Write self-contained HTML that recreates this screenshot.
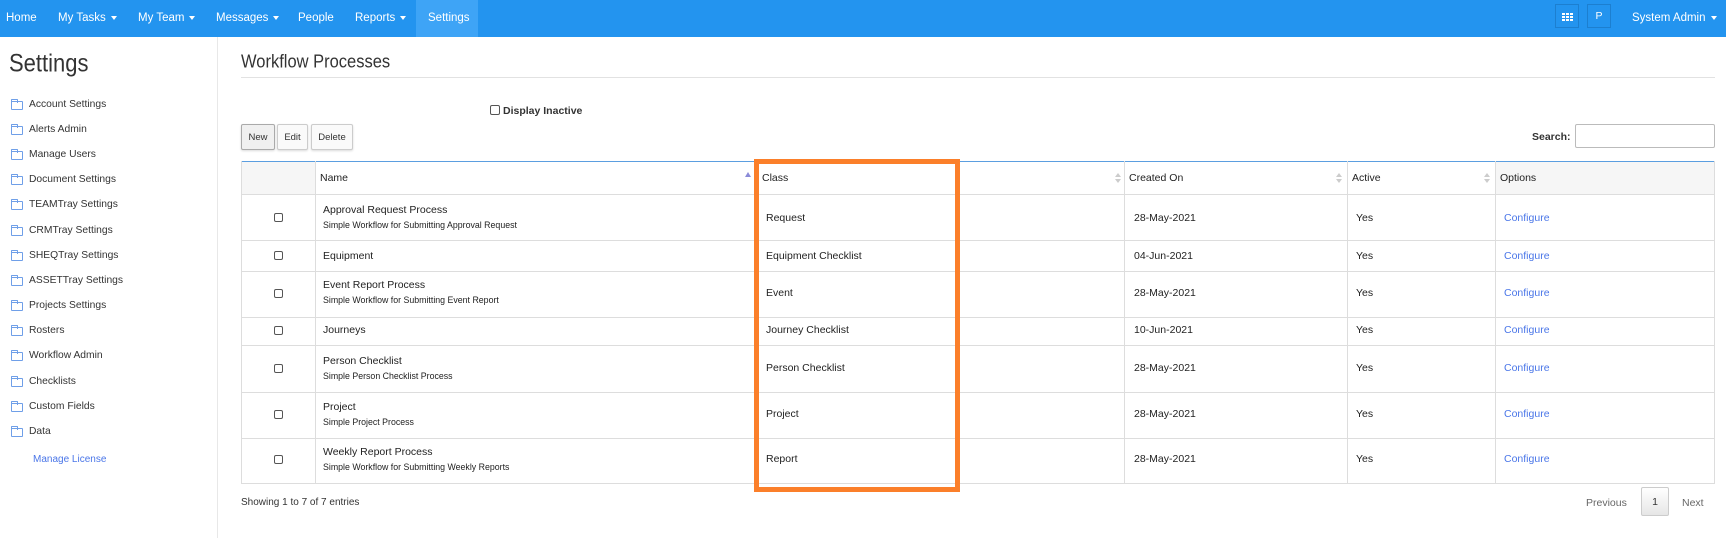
<!DOCTYPE html>
<html><head><meta charset="utf-8">
<style>
*{box-sizing:border-box;margin:0;padding:0}
body{width:1726px;height:538px;overflow:hidden;background:#fff;font-family:"Liberation Sans",Arial,sans-serif;color:#222;position:relative}
.a{position:absolute;white-space:nowrap}
.nav{position:absolute;left:0;top:0;width:1726px;height:37px;background:#2394ef}
.nav .a{color:#fff;font-size:11.5px;top:12px}
.car{display:inline-block;width:0;height:0;border-left:3.5px solid transparent;border-right:3.5px solid transparent;border-top:4px solid #fff;vertical-align:middle;margin-left:5px}
.side{font-size:10.3px;color:#333}
.side .a{margin-top:2px}
.side .fold{margin-top:2px}
.fold{position:absolute;width:12px;height:9px;border:1px solid #6f9fe8;border-radius:1px}
.fold:before{content:"";position:absolute;left:-1px;top:-3px;width:5px;height:3px;border:1px solid #6f9fe8;border-bottom:none;border-radius:1px 1px 0 0}
.btn{position:absolute;top:124px;height:26px;border:1px solid #ccc;border-radius:2px;background:#fafafa;font-size:9.5px;color:#333;text-align:center;line-height:26px;box-shadow:0 1px 2px rgba(0,0,0,.15)}
.hl{position:absolute;left:241px;width:1474px;height:1px;background:#ddd}
.vl{position:absolute;width:1px;background:#ddd;top:161px;height:322px}
.t{font-size:10.5px;color:#222}
.s{font-size:8.8px;color:#222;margin-top:-2px}
.cb{position:absolute;width:9px;height:9px;border:1px solid #555;border-radius:2px;left:274px}
.cfg{color:#4a76e8;font-size:10.5px}
.sort{position:absolute;width:6px}
.sort:before{content:"";position:absolute;border-left:3px solid transparent;border-right:3px solid transparent;border-bottom:4px solid #ccc;top:0}
.sort:after{content:"";position:absolute;border-left:3px solid transparent;border-right:3px solid transparent;border-top:4px solid #ccc;top:6px}
</style></head><body>
<div class="nav">
<div style="position:absolute;left:416px;top:0;width:62px;height:37px;background:#3ea4f6"></div>
<div class="a" style="left:6px">Home</div>
<div class="a" style="left:58px">My Tasks<span class="car"></span></div>
<div class="a" style="left:138px">My Team<span class="car"></span></div>
<div class="a" style="left:216px">Messages<span class="car"></span></div>
<div class="a" style="left:298px">People</div>
<div class="a" style="left:355px">Reports<span class="car"></span></div>
<div class="a" style="left:428px">Settings</div>
<div style="position:absolute;left:1555px;top:4px;width:24px;height:24px;border:1px solid #1c7fd0"><div style="position:absolute;left:6px;top:8px;width:11px;height:8px;background:repeating-linear-gradient(90deg,#fff 0 3px,transparent 3px 4px)"></div><div style="position:absolute;left:6px;top:10px;width:11px;height:1px;background:#2394ef"></div><div style="position:absolute;left:6px;top:13px;width:11px;height:1px;background:#2394ef"></div></div>
<div style="position:absolute;left:1587px;top:4px;width:24px;height:24px;border:1px solid #1c7fd0;color:#fff;font-size:10.5px;text-align:center;line-height:22px">P</div>
<div class="a" style="left:1632px">System Admin<span class="car"></span></div>
</div>

<div style="position:absolute;left:217px;top:37px;width:1px;height:501px;background:#e8e8e8"></div>
<div class="a" style="left:9px;top:49px;font-size:22px;color:#333;transform:scaleY(1.12);transform-origin:top left">Settings</div>

<div class="side">
<div class="fold" style="left:11px;top:99px"></div><div class="a" style="left:29px;top:97px">Account Settings</div>
<div class="fold" style="left:11px;top:124px"></div><div class="a" style="left:29px;top:122px">Alerts Admin</div>
<div class="fold" style="left:11px;top:149px"></div><div class="a" style="left:29px;top:147px">Manage Users</div>
<div class="fold" style="left:11px;top:174px"></div><div class="a" style="left:29px;top:172px">Document Settings</div>
<div class="fold" style="left:11px;top:199px"></div><div class="a" style="left:29px;top:197px">TEAMTray Settings</div>
<div class="fold" style="left:11px;top:225px"></div><div class="a" style="left:29px;top:223px">CRMTray Settings</div>
<div class="fold" style="left:11px;top:250px"></div><div class="a" style="left:29px;top:248px">SHEQTray Settings</div>
<div class="fold" style="left:11px;top:275px"></div><div class="a" style="left:29px;top:273px">ASSETTray Settings</div>
<div class="fold" style="left:11px;top:300px"></div><div class="a" style="left:29px;top:298px">Projects Settings</div>
<div class="fold" style="left:11px;top:325px"></div><div class="a" style="left:29px;top:323px">Rosters</div>
<div class="fold" style="left:11px;top:350px"></div><div class="a" style="left:29px;top:348px">Workflow Admin</div>
<div class="fold" style="left:11px;top:376px"></div><div class="a" style="left:29px;top:374px">Checklists</div>
<div class="fold" style="left:11px;top:401px"></div><div class="a" style="left:29px;top:399px">Custom Fields</div>
<div class="fold" style="left:11px;top:426px"></div><div class="a" style="left:29px;top:424px">Data</div>
<div class="a" style="left:33px;top:452px;color:#4a76e8;font-size:10px">Manage License</div>
</div>

<div class="a" style="left:241px;top:52px;font-size:16.5px;color:#333;transform:scaleY(1.1);transform-origin:top left">Workflow Processes</div>
<div style="position:absolute;left:241px;top:77px;width:1474px;height:1px;background:#e2e2e2"></div>

<div style="position:absolute;left:490px;top:105px;width:10px;height:10px;border:1px solid #555;border-radius:2px"></div>
<div class="a" style="left:503px;top:105px;font-size:10.5px;font-weight:bold;color:#333">Display Inactive</div>

<div class="btn" style="left:241px;width:34px;background:#f0f0f0;border-color:#aaa">New</div>
<div class="btn" style="left:277px;width:31px">Edit</div>
<div class="btn" style="left:311px;width:42px">Delete</div>

<div class="a" style="left:1532px;top:131px;font-size:10.5px;font-weight:bold;color:#333">Search:</div>
<div style="position:absolute;left:1575px;top:124px;width:140px;height:24px;border:1px solid #bbb;border-radius:2px"></div>

<div style="position:absolute;left:241px;top:161px;width:74px;height:33px;background:#f6f6f6"></div>
<div style="position:absolute;left:1495px;top:161px;width:220px;height:33px;background:#f6f6f6"></div>
<div style="position:absolute;left:241px;top:161px;width:1474px;height:1px;background:#5b9ee0"></div>
<div class="hl" style="top:194px"></div>
<div class="hl" style="top:240px"></div>
<div class="hl" style="top:271px"></div>
<div class="hl" style="top:317px"></div>
<div class="hl" style="top:345px"></div>
<div class="hl" style="top:392px"></div>
<div class="hl" style="top:438px"></div>
<div class="hl" style="top:483px"></div>
<div class="vl" style="left:241px"></div>
<div class="vl" style="left:315px"></div>
<div class="vl" style="left:757px"></div>
<div class="vl" style="left:1124px"></div>
<div class="vl" style="left:1347px"></div>
<div class="vl" style="left:1495px"></div>
<div class="vl" style="left:1714px"></div>

<div class="a t" style="left:320px;top:172px">Name</div>
<div style="position:absolute;left:745px;top:172px;border-left:3px solid transparent;border-right:3px solid transparent;border-bottom:5px solid #8b8bd8"></div>
<div class="a t" style="left:762px;top:172px">Class</div>
<div class="sort" style="left:1115px;top:173px"></div>
<div class="a t" style="left:1129px;top:172px">Created On</div>
<div class="sort" style="left:1336px;top:173px"></div>
<div class="a t" style="left:1352px;top:172px">Active</div>
<div class="sort" style="left:1484px;top:173px"></div>
<div class="a t" style="left:1500px;top:172px">Options</div>

<div class="cb" style="top:213px"></div>
<div class="a t" style="left:323px;top:204px">Approval Request Process</div>
<div class="a s" style="left:323px;top:222px">Simple Workflow for Submitting Approval Request</div>
<div class="a t" style="left:766px;top:212px">Request</div>
<div class="a t" style="left:1134px;top:212px">28-May-2021</div>
<div class="a t" style="left:1356px;top:212px">Yes</div>
<div class="a cfg" style="left:1504px;top:212px">Configure</div>

<div class="cb" style="top:251px"></div>
<div class="a t" style="left:323px;top:250px">Equipment</div>
<div class="a t" style="left:766px;top:250px">Equipment Checklist</div>
<div class="a t" style="left:1134px;top:250px">04-Jun-2021</div>
<div class="a t" style="left:1356px;top:250px">Yes</div>
<div class="a cfg" style="left:1504px;top:250px">Configure</div>

<div class="cb" style="top:289px"></div>
<div class="a t" style="left:323px;top:279px">Event Report Process</div>
<div class="a s" style="left:323px;top:297px">Simple Workflow for Submitting Event Report</div>
<div class="a t" style="left:766px;top:287px">Event</div>
<div class="a t" style="left:1134px;top:287px">28-May-2021</div>
<div class="a t" style="left:1356px;top:287px">Yes</div>
<div class="a cfg" style="left:1504px;top:287px">Configure</div>

<div class="cb" style="top:326px"></div>
<div class="a t" style="left:323px;top:324px">Journeys</div>
<div class="a t" style="left:766px;top:324px">Journey Checklist</div>
<div class="a t" style="left:1134px;top:324px">10-Jun-2021</div>
<div class="a t" style="left:1356px;top:324px">Yes</div>
<div class="a cfg" style="left:1504px;top:324px">Configure</div>

<div class="cb" style="top:364px"></div>
<div class="a t" style="left:323px;top:355px">Person Checklist</div>
<div class="a s" style="left:323px;top:373px">Simple Person Checklist Process</div>
<div class="a t" style="left:766px;top:362px">Person Checklist</div>
<div class="a t" style="left:1134px;top:362px">28-May-2021</div>
<div class="a t" style="left:1356px;top:362px">Yes</div>
<div class="a cfg" style="left:1504px;top:362px">Configure</div>

<div class="cb" style="top:410px"></div>
<div class="a t" style="left:323px;top:401px">Project</div>
<div class="a s" style="left:323px;top:419px">Simple Project Process</div>
<div class="a t" style="left:766px;top:408px">Project</div>
<div class="a t" style="left:1134px;top:408px">28-May-2021</div>
<div class="a t" style="left:1356px;top:408px">Yes</div>
<div class="a cfg" style="left:1504px;top:408px">Configure</div>

<div class="cb" style="top:455px"></div>
<div class="a t" style="left:323px;top:446px">Weekly Report Process</div>
<div class="a s" style="left:323px;top:464px">Simple Workflow for Submitting Weekly Reports</div>
<div class="a t" style="left:766px;top:453px">Report</div>
<div class="a t" style="left:1134px;top:453px">28-May-2021</div>
<div class="a t" style="left:1356px;top:453px">Yes</div>
<div class="a cfg" style="left:1504px;top:453px">Configure</div>

<div style="position:absolute;left:754px;top:159px;width:206px;height:333px;border:5px solid #fb7f2a"></div>

<div class="a" style="left:241px;top:497px;font-size:10px;color:#333">Showing 1 to 7 of 7 entries</div>
<div class="a" style="left:1586px;top:497px;font-size:10.5px;color:#666">Previous</div>
<div style="position:absolute;left:1641px;top:487px;width:28px;height:29px;border:1px solid #ccc;border-radius:2px;background:linear-gradient(#fff,#e6e6e6);font-size:10.5px;text-align:center;line-height:29px;color:#333">1</div>
<div class="a" style="left:1682px;top:497px;font-size:10.5px;color:#666">Next</div>
</body></html>
